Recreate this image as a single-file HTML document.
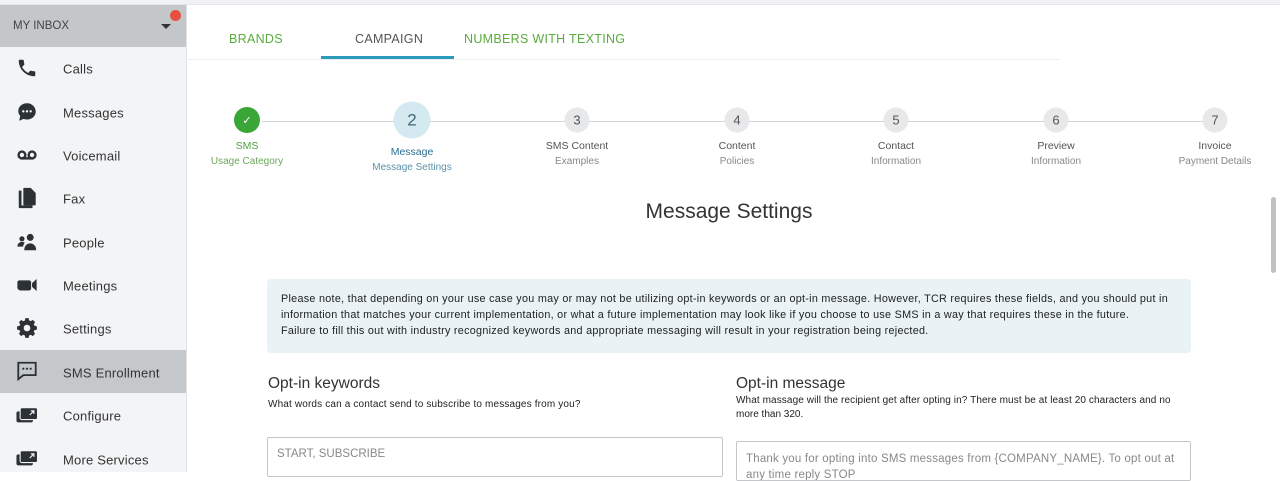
<!DOCTYPE html>
<html><head><meta charset="utf-8"><style>
*{margin:0;padding:0;box-sizing:border-box}
body{width:1280px;height:472px;overflow:hidden;background:#fff;font-family:"Liberation Sans","DejaVu Sans",sans-serif;position:relative;color:#333}
.a{position:absolute;white-space:nowrap}
#top{left:0;top:0;width:1280px;height:5px;background:#f1f2f4;border-bottom:1px solid #e3e5e8}
#side{left:0;top:5px;width:187px;height:467px;background:#f3f4f6;border-right:1px solid #e2e4e6}
#inbox{left:0;top:5px;width:186px;height:42px;background:#c3c7ca}
.it{position:absolute;left:63px;font-size:13px;color:#333;transform:translateY(-50%);letter-spacing:.2px}
.ic{position:absolute;left:16px;width:22px;height:22px;transform:translateY(-50%)}
.tab{position:absolute;top:32px;font-size:12.5px;letter-spacing:.3px}
.c{position:absolute;border-radius:50%;display:flex;align-items:center;justify-content:center;font-size:13px;color:#555;transform:translate(-50%,-50%)}
.lb{position:absolute;font-size:10.5px;transform:translateX(-50%);text-align:center;white-space:nowrap}
.sb{position:absolute;font-size:10px;color:#888;transform:translateX(-50%);white-space:nowrap}
.info{font-size:10.8px;color:#222;letter-spacing:.28px}
</style></head><body>
<div id="top" class="a"></div>
<div id="side" class="a"></div>
<div id="inbox" class="a"></div>
<div class="a" style="left:13px;top:20px;font-size:11.5px;color:#444">MY INBOX</div>
<div class="a" style="left:161px;top:24px;width:0;height:0;border-left:5px solid transparent;border-right:5px solid transparent;border-top:5px solid #333"></div>
<div class="a" style="left:170px;top:10px;width:11px;height:11px;border-radius:50%;background:#e8503e"></div>
<div class="a" style="left:0;top:350px;width:186px;height:43px;background:#c5c8cb"></div>

<svg class="ic" style="top:68px" viewBox="0 0 24 24"><path fill="#2c3136" d="M6.6 10.8c1.4 2.8 3.8 5.1 6.6 6.6l2.2-2.2c.3-.3.7-.4 1-.2 1.1.4 2.3.6 3.6.6.6 0 1 .4 1 1V20c0 .6-.4 1-1 1C10.6 21 3 13.4 3 4c0-.6.4-1 1-1h3.5c.6 0 1 .4 1 1 0 1.2.2 2.4.6 3.6.1.3 0 .7-.2 1z"/></svg>
<div class="it" style="top:69px">Calls</div>
<svg class="ic" style="top:112px" viewBox="0 0 24 24"><path fill="#2c3136" d="M12 2.5C6.5 2.5 2.5 6.3 2.5 11c0 2 .8 3.8 2.1 5.2L3.5 21.5l4.8-2c1.1.4 2.4.7 3.7.7 5.5 0 9.5-3.8 9.5-8.6S17.5 2.5 12 2.5z"/><circle cx="8" cy="11.3" r="1.3" fill="#f3f4f6"/><circle cx="12" cy="11.3" r="1.3" fill="#f3f4f6"/><circle cx="16" cy="11.3" r="1.3" fill="#f3f4f6"/></svg>
<div class="it" style="top:113px">Messages</div>
<svg class="ic" style="top:155px" viewBox="0 0 24 24"><circle cx="6.5" cy="12" r="3.7" fill="none" stroke="#2c3136" stroke-width="2.6"/><circle cx="17.5" cy="12" r="3.7" fill="none" stroke="#2c3136" stroke-width="2.6"/><path d="M6.5 15.7h11" stroke="#2c3136" stroke-width="2.6"/></svg>
<div class="it" style="top:156px">Voicemail</div>
<svg class="ic" style="top:198px" viewBox="0 0 24 24"><path fill="#2c3136" d="M3 4h3v16h12v3H4c-.6 0-1-.4-1-1z"/><path fill="#2c3136" d="M9 1h7l5.5 5.5V19c0 .6-.4 1-1 1H9c-.6 0-1-.4-1-1V2c0-.6.4-1 1-1z"/></svg>
<div class="it" style="top:199px">Fax</div>
<svg class="ic" style="top:242px" viewBox="0 0 24 24"><circle cx="15.5" cy="7" r="3.8" fill="#2c3136"/><path fill="#2c3136" d="M9 21c0-4.5 2.7-7.5 6.5-7.5S22 16.5 22 21z"/><circle cx="6.5" cy="8.5" r="2.8" fill="#2c3136"/><path fill="#2c3136" d="M1.5 17c0-3 2-5.2 5-5.2 1.3 0 2.3.5 3 1.2C8.5 14.3 7.8 15.7 7.8 17z"/></svg>
<div class="it" style="top:243px">People</div>
<svg class="ic" style="top:285px" viewBox="0 0 24 24"><path fill="#2c3136" d="M1.5 9c0-1 1-2 2-2h11c1 0 2 1 2 2v7c0 1-1 2-2 2H5c-2 0-3.5-1.5-3.5-3.5z"/><path fill="#2c3136" d="M17.5 10l5-4.5v13l-5-4.5z"/></svg>
<div class="it" style="top:286px">Meetings</div>
<svg class="ic" style="top:328px" viewBox="0 0 24 24"><path fill="#2c3136" d="M10 0h4l.6 2.8 2 .9 2.4-1.6 2.8 2.8-1.6 2.4.9 2L24 10v4l-2.9.6-.9 2 1.6 2.4-2.8 2.8-2.4-1.6-2 .9L14 24h-4l-.6-2.9-2-.9L5 21.8 2.2 19l1.6-2.4-.9-2L0 14v-4l2.9-.6.9-2L2.2 5 5 2.2l2.4 1.6 2-.9z" transform="translate(1.2 1.2) scale(.9)"/><circle cx="12" cy="12" r="3.6" fill="#f3f4f6"/></svg>
<div class="it" style="top:329px">Settings</div>
<svg class="ic" style="top:371px" viewBox="0 0 24 24"><path fill="none" stroke="#2c3136" stroke-width="2" d="M2.5 3h19v13.5H8l-5.5 4.5z"/><circle cx="8" cy="9.5" r="1.2" fill="#2c3136"/><circle cx="12" cy="9.5" r="1.2" fill="#2c3136"/><circle cx="16" cy="9.5" r="1.2" fill="#2c3136"/></svg>
<div class="it" style="top:373px">SMS Enrollment</div>
<svg class="ic" style="top:415px" viewBox="0 0 24 24"><rect x="0.5" y="8" width="18" height="12" rx="2" fill="#2c3136"/><rect x="4.5" y="4" width="19" height="13" rx="2" fill="#2c3136" stroke="#f3f4f6" stroke-width="1.2"/><path d="M15 12l4.5-4.5m-3.3 0h3.3v3.3" stroke="#f3f4f6" stroke-width="1.3" fill="none"/></svg>
<div class="it" style="top:416px">Configure</div>
<svg class="ic" style="top:458px" viewBox="0 0 24 24"><rect x="0.5" y="8" width="18" height="12" rx="2" fill="#2c3136"/><rect x="4.5" y="4" width="19" height="13" rx="2" fill="#2c3136" stroke="#f3f4f6" stroke-width="1.2"/><path d="M15 12l4.5-4.5m-3.3 0h3.3v3.3" stroke="#f3f4f6" stroke-width="1.3" fill="none"/></svg>
<div class="it" style="top:460px">More Services</div>

<div class="tab" style="left:229px;color:#5aab3e">BRANDS</div>
<div class="tab" style="left:355px;color:#555">CAMPAIGN</div>
<div class="tab" style="left:464px;color:#5aab3e">NUMBERS WITH TEXTING</div>
<div class="a" style="left:188px;top:59px;width:872px;height:1px;background:#eceef0"></div>
<div class="a" style="left:321px;top:56px;width:133px;height:3px;background:#2a9bb8"></div>

<div class="a" style="left:262px;top:121px;width:946px;height:1px;background:#d2d4d6"></div>
<div class="c" style="left:247px;top:120px;width:26px;height:26px;background:#3aa637;color:#fff;font-size:11px">✓</div>
<div class="c" style="left:412px;top:120px;width:37px;height:37px;background:#d5e9f0;font-size:17px;color:#467">2</div>
<div class="c" style="left:577px;top:120px;width:25px;height:25px;background:#e7e8ea">3</div>
<div class="c" style="left:737px;top:120px;width:25px;height:25px;background:#e7e8ea">4</div>
<div class="c" style="left:896px;top:120px;width:25px;height:25px;background:#e7e8ea">5</div>
<div class="c" style="left:1056px;top:120px;width:25px;height:25px;background:#e7e8ea">6</div>
<div class="c" style="left:1215px;top:120px;width:25px;height:25px;background:#e7e8ea">7</div>
<div class="lb" style="left:247px;top:140px;color:#4ea33a">SMS</div><div class="sb" style="left:247px;top:156px;color:#6aa85a">Usage Category</div>
<div class="lb" style="left:412px;top:146px;color:#2a6f8f">Message</div><div class="sb" style="left:412px;top:162px;color:#5b92aa">Message Settings</div>
<div class="lb" style="left:577px;top:140px;color:#555">SMS Content</div><div class="sb" style="left:577px;top:156px">Examples</div>
<div class="lb" style="left:737px;top:140px;color:#555">Content</div><div class="sb" style="left:737px;top:156px">Policies</div>
<div class="lb" style="left:896px;top:140px;color:#555">Contact</div><div class="sb" style="left:896px;top:156px">Information</div>
<div class="lb" style="left:1056px;top:140px;color:#555">Preview</div><div class="sb" style="left:1056px;top:156px">Information</div>
<div class="lb" style="left:1215px;top:140px;color:#555">Invoice</div><div class="sb" style="left:1215px;top:156px">Payment Details</div>

<div class="a" style="left:729px;top:200px;transform:translateX(-50%);font-size:21px;color:#333">Message Settings</div>

<div class="a" style="left:267px;top:279px;width:924px;height:74px;background:#e9f3f5;border-radius:4px"></div>
<div class="a info" style="left:281px;top:293px">Please note, that depending on your use case you may or may not be utilizing opt-in keywords or an opt-in message. However, TCR requires these fields, and you should put in</div>
<div class="a info" style="left:281px;top:309px">information that matches your current implementation, or what a future implementation may look like if you choose to use SMS in a way that requires these in the future.</div>
<div class="a info" style="left:281px;top:325px">Failure to fill this out with industry recognized keywords and appropriate messaging will result in your registration being rejected.</div>

<div class="a" style="left:268px;top:375px;font-size:15.5px;color:#333">Opt-in keywords</div>
<div class="a" style="left:268px;top:399px;font-size:10px;color:#222;letter-spacing:.15px">What words can a contact send to subscribe to messages from you?</div>
<div class="a" style="left:267px;top:437px;width:456px;height:40px;border:1px solid #c4c6c8;border-radius:2px"></div>
<div class="a" style="left:277px;top:448px;font-size:11.5px;color:#888">START, SUBSCRIBE</div>

<div class="a" style="left:736px;top:375px;font-size:15.5px;color:#333">Opt-in message</div>
<div class="a" style="left:736px;top:395px;font-size:10px;color:#222;letter-spacing:.1px">What massage will the recipient get after opting in? There must be at least 20 characters and no</div>
<div class="a" style="left:736px;top:409px;font-size:10px;color:#222">more than 320.</div>
<div class="a" style="left:736px;top:441px;width:455px;height:40px;border:1px solid #c4c6c8;border-radius:2px;overflow:hidden">
<div style="position:absolute;left:9px;top:9px;font-size:11.5px;color:#888;white-space:nowrap;line-height:16px;letter-spacing:.2px">Thank you for opting into SMS messages from {COMPANY_NAME}. To opt out at<br>any time reply STOP</div></div>

<div class="a" style="left:1271px;top:197px;width:5px;height:76px;background:#c1c1c1;border-radius:3px"></div>
</body></html>
